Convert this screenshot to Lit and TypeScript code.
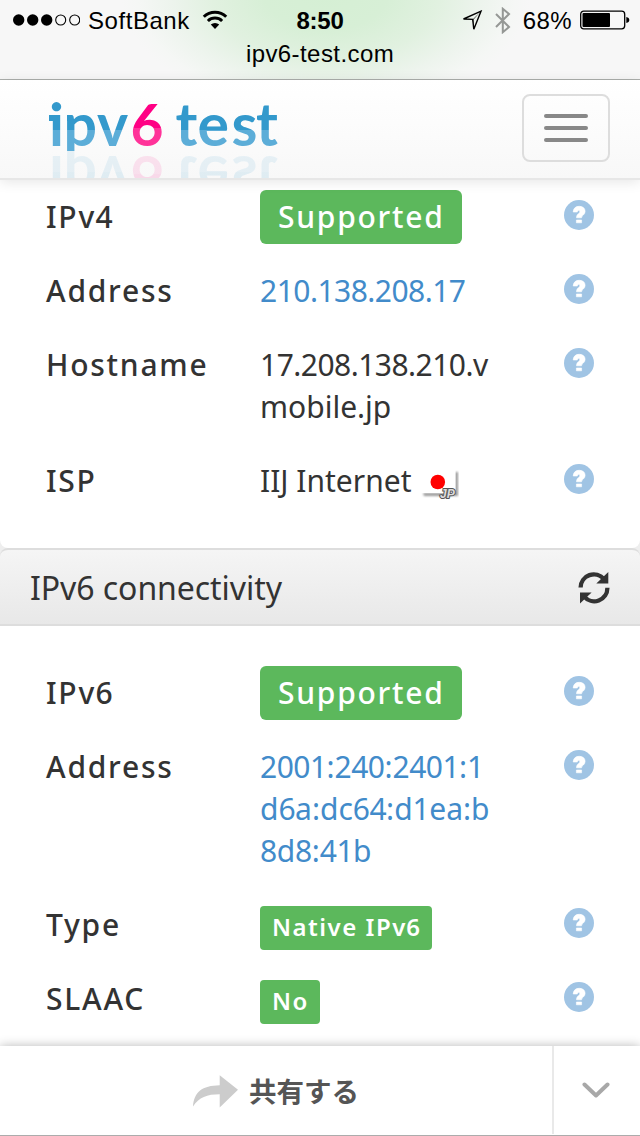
import { LitElement, html, svg, css } from "lit";
import { customElement, property } from "lit/decorators.js";

interface Row {
  label: string;
  lines: string[];
  kind?: "text" | "link" | "badge" | "tag";
  flag?: boolean;
}

const ipv4: Row[] = [
  { label: "IPv4", lines: ["Supported"], kind: "badge" },
  { label: "Address", lines: ["210.138.208.17"], kind: "link" },
  { label: "Hostname", lines: ["17.208.138.210.v", "mobile.jp"] },
  { label: "ISP", lines: ["IIJ Internet"], flag: true },
];

const ipv6: Row[] = [
  { label: "IPv6", lines: ["Supported"], kind: "badge" },
  { label: "Address", lines: ["2001:240:2401:1", "d6a:dc64:d1ea:b", "8d8:41b"], kind: "link" },
  { label: "Type", lines: ["Native IPv6"], kind: "tag" },
  { label: "SLAAC", lines: ["No"], kind: "tag" },
];

// Digits are set slightly tighter than letters.
const tightDigits = (text: string) =>
  text.split(/(\d+\.?)/).filter(Boolean).map((part) => (/\d/.test(part) ? html`<span class="num">${part}</span>` : part));

@customElement("status-bar")
class StatusBar extends LitElement {
  static styles = css`
    :host { display: block; height: 80px; box-sizing: border-box; border-bottom: 1px solid #acafac;
      background: radial-gradient(ellipse 205px 120px at 326px -6px, #d5efd4 0%, #d7efd6 30%, #e1f1e0 55%, #edf4ed 76%, #f5f7f5 92%, rgba(247,247,247,0) 100%), #f7f7f7;
      font: 24px/30px "Liberation Sans", Arial, sans-serif; color: #000; }
    .row { display: grid; grid-template-columns: 1fr auto 1fr; height: 40px; align-items: center; }
    .left { display: flex; align-items: center; padding-left: 12px; }
    .right { display: flex; align-items: center; justify-content: flex-end; padding-right: 10px; }
    .dots { margin-right: 8px; }
    .carrier { letter-spacing: .55px; margin-right: 12px; padding-top: 2px; }
    .time { font-weight: 700; font-size: 24px; letter-spacing: -.2px; padding-top: 2px; }
    .pct { margin: 0 8px 0 12px; padding-top: 2px; letter-spacing: .4px; }
    .host { text-align: center; letter-spacing: .42px; line-height: 28px; }
    svg { display: block; flex: none; }
    .bt { margin-left: 12px; }
  `;
  render() {
    return html`
      <div class="row">
        <div class="left">
          <svg class="dots" width="68" height="14" viewBox="0 0 68 14">
            ${[0, 1, 2, 3, 4].map((i) => svg`<circle cx=${6.7 + i * 14} cy="7" r=${i < 3 ? 5.7 : 5} fill=${i < 3 ? "#000" : "none"} stroke=${i < 3 ? "none" : "#000"} stroke-width="1.1"/>`)}
          </svg>
          <span class="carrier">SoftBank</span>
          <svg width="26" height="20" viewBox="0 0 26 20">
            <path d="M1.8 6.7a16 16 0 0 1 22.4 0M5.9 11a10.2 10.2 0 0 1 14.2 0" fill="none" stroke="#000" stroke-width="3"/>
            <path d="M8.8 14.6a6 6 0 0 1 8.4 0L13 19z"/>
          </svg>
        </div>
        <span class="time">8:50</span>
        <div class="right">
          <svg width="21" height="21" viewBox="0 0 21 21"><path d="M1.5 9L19 1.2 11.8 19.2 10.7 9.4z" fill="none" stroke="#000" stroke-width="1.4"/><path d="M19 1.2L10.7 9.4l1.1 9.8-.5-9.5z"/></svg>
          <svg class="bt" width="16" height="27" viewBox="0 0 16 27"><path d="M1 7l13 13-6.2 5.2V1.8L14 7 1 20" fill="none" stroke="#959895" stroke-width="2"/></svg>
          <span class="pct">68%</span>
          <svg width="50" height="20" viewBox="0 0 50 20"><rect x=".7" y="1.2" width="44" height="17.6" rx="3" fill="none" stroke="#000" stroke-width="1.3"/><rect x="2.5" y="3" width="27.5" height="14" rx="1"/><path d="M46.3 7q3 .6 3 3t-3 3z"/></svg>
        </div>
      </div>
      <div class="host">ipv6-test.com</div>`;
  }
}

@customElement("nav-header")
class NavHeader extends LitElement {
  static styles = css`
    :host { display: flex; justify-content: space-between; height: 100px; box-sizing: border-box; border-bottom: 2px solid #e7e7e7;
      background: linear-gradient(#fff, #f8f8f8); box-shadow: 0 2px 12px rgba(0,0,0,.1); position: relative; }
    .logo { display: block; margin-left: 40px; }
    .word { font: 700 59px "Lato", sans-serif; }
    .six { font-size: 57px; }
    .menu { width: 88px; height: 68px; box-sizing: border-box; margin: 14px 30px 0 0; padding: 0; border: 2px solid #ddd; border-radius: 8px;
      background: none; display: flex; flex-direction: column; align-items: center; justify-content: center; gap: 8px; }
    .bar { width: 44px; height: 4px; border-radius: 2px; background: #888; }
  `;
  render() {
    return html`
      <svg class="logo" width="250" height="98" viewBox="40 80 250 98">
        <defs>
          <linearGradient id="b" gradientUnits="userSpaceOnUse" x1="0" x2="0" y1="100" y2="160"><stop offset=".5" stop-color="#3399cc"/><stop offset=".5" stop-color="#5cadd8"/></linearGradient>
          <linearGradient id="p" gradientUnits="userSpaceOnUse" x1="0" x2="0" y1="100" y2="160"><stop offset=".47" stop-color="#ff0084"/><stop offset=".47" stop-color="#ff3399"/></linearGradient>
          <clipPath id="c"><rect x="40" y="90" width="250" height="61"/></clipPath>
          <g id="w" clip-path="url(#c)">
            <text class="word" y="146" x="49 63.5 97 130.5 162 175.5 197.5 231.5 256" fill="url(#b)">ipv<tspan class="six" fill="url(#p)">6</tspan> test</text>
            <path fill="#3399cc" d="M49 115h6v6h-6zM67 115h5v6h-5z"/>
          </g>
        </defs>
        <use href="#w"/>
        <use href="#w" transform="matrix(1 0 0 -1 0 302)" opacity=".12"/>
      </svg>
      <button class="menu" aria-label="Menu"><span class="bar"></span><span class="bar"></span><span class="bar"></span></button>`;
  }
}

@customElement("info-rows")
class InfoRows extends LitElement {
  @property({ attribute: false }) rows: Row[] = [];
  static styles = css`
    :host { display: flex; flex-direction: column; gap: 32px; padding: 0 46px; font: 30px/42px "Noto Sans", sans-serif; color: #333; }
    .row { display: grid; grid-template-columns: 214px 1fr 30px; align-items: start; }
    .label { font-weight: 500; letter-spacing: 1.75px; }
    .line { display: block; white-space: nowrap; }
    .value { display: block; min-width: 0; }
    .link { color: #428bca; }
    .line .num { letter-spacing: -.53px; }
    .label .num, .tag .num { letter-spacing: 1px; margin-left: -.6px; }
    .badge, .tag { display: block; width: fit-content; background: #5cb85c; color: #fff; font-weight: 500; box-sizing: border-box; }
    .badge { margin: -6px 0; height: 54px; line-height: 54px; padding: 0 17px 0 18px; width: 202px; border-radius: 6px; letter-spacing: 1.75px; }
    .tag { margin: 2px 0 -4px; height: 44px; line-height: 42px; padding: 0 11.3px 0 12px; border-radius: 4px; font-size: 24px; font-weight: 600; letter-spacing: 1.5px; }
    .help { display: block; margin-top: 4px; }
    .isp { display: flex; align-items: center; }
    .flag { margin: 4px 0 -2px 10px; }
    .code { font: italic 700 12px "Liberation Sans", sans-serif; }
  `;
  render() {
    return this.rows.map((r) => html`
      <div class="row">
        <span class="label">${tightDigits(r.label)}</span>
        <span class="value ${r.flag ? "isp" : ""}">
          ${r.lines.map((l) => html`<span class="${r.kind === "badge" || r.kind === "tag" ? r.kind : `line ${r.kind ?? ""}`}">${tightDigits(l)}</span>`)}
          ${r.flag ? html`<svg class="flag" width="38" height="32" viewBox="0 0 38 32">
            <defs><filter id="s" x="-20%" y="-20%" width="140%" height="150%"><feGaussianBlur stdDeviation=".9"/></filter></defs>
            <path d="M2 25H34V4h3V28H3z" fill="#999" filter="url(#s)"/>
            <rect x="0" y="2" width="34.5" height="23" fill="#fff"/>
            <circle cx="16.8" cy="14" r="7.3" fill="#f00"/>
            <text class="code" x="19" y="29.5" fill="#ddd" stroke="#555" stroke-width="2" paint-order="stroke">JP</text>
          </svg>` : ""}
        </span>
        <svg class="help" width="30" height="30" viewBox="0 0 30 30">
          <circle cx="15" cy="15" r="15" fill="#a0c4e4"/>
          <path d="M9.2 12c.2-3.8 2.5-5.7 6-5.7 3.4 0 5.9 1.9 5.9 5 0 3.9-3.6 4-3.6 6.5h-5c0-4.2 3.3-4.1 3.3-6.1 0-.8-.4-1.2-1.1-1.2-.8 0-1.3.6-1.4 1.5zM12.4 20h5.2v2.8h-5.2z" fill="#fff" stroke="#fff" stroke-width=".6"/>
        </svg>
      </div>`);
  }
}

@customElement("share-bar")
class ShareBar extends LitElement {
  static styles = css`
    :host { display: flex; height: 90px; box-sizing: border-box; border-bottom: 1px solid #acacac; background: #fff;
      box-shadow: 0 0 10px rgba(0,0,0,.28); position: relative; font: 700 28px/40px "Noto Sans CJK JP", sans-serif; color: #555; }
    .share { width: 552px; display: flex; align-items: center; justify-content: center; gap: 11px; }
    .arrow { margin-top: 2px; }
    .text { font-size: 27.5px; margin-top: -2px; }
    .more { flex: 1; border-left: 2px solid #e9e9e9; display: flex; align-items: center; justify-content: center; height: 88px; padding-right: 2px; }
    svg { display: block; }
  `;
  render() {
    return html`
      <div class="share">
        <svg class="arrow" width="45" height="33" viewBox="0 0 45 33"><path d="M0 31.5C1 17 9 10.5 26.7 10.2V.3L45 14.8 26.7 32.6V19.3C14 19.3 6 22.3 0 31.5z" fill="#ccc"/></svg>
        <span class="text">共有する</span>
      </div>
      <div class="more"><svg width="28" height="18" viewBox="0 0 28 18"><path d="M2.5 3.5L14 14.5 25.5 3.5" fill="none" stroke="#a8a8a8" stroke-width="4" stroke-linecap="round" stroke-linejoin="round"/></svg></div>`;
  }
}

@customElement("app-root")
class AppRoot extends LitElement {
  static styles = css`
    :host { display: flex; flex-direction: column; height: 1136px; overflow: hidden; background: #fff; }
    .content { flex: 1; min-height: 0; background: #eee; }
    .first { padding-top: 16px; height: 352px; border-radius: 0 0 8px 8px; box-sizing: content-box; background: #fff; }
    .second { padding-top: 46px; height: 374px; background: #fff; }
    .heading { display: flex; align-items: center; justify-content: space-between; height: 78px; box-sizing: border-box; margin: 0; padding: 0 30px;
      border: solid #ddd; border-width: 2px 0; border-radius: 8px 8px 0 0; background: linear-gradient(#f5f5f5, #e8e8e8);
      font: 400 32px/42px "Noto Sans", sans-serif; color: #333; }
    .title { padding-top: 2px; letter-spacing: -.06px; }
    .refresh { margin-top: 2px; }
  `;
  render() {
    return html`
      <status-bar></status-bar>
      <nav-header></nav-header>
      <div class="content">
        <div class="first"><info-rows .rows=${ipv4}></info-rows></div>
        <h3 class="heading"><span class="title">IPv6 connectivity</span>
          <svg class="refresh" width="32" height="32" viewBox="0 0 32 32"><path d="M2.6 15.5A13.2 13.2 0 0 1 26 7.2M29.4 15.8A13.2 13.2 0 0 1 6 24.4" fill="none" stroke="#333" stroke-width="4.3"/><path d="M30.3 0V11.5H18.3zM2 31.5V20.6H13.6z" fill="#333"/></svg>
        </h3>
        <div class="second"><info-rows .rows=${ipv6}></info-rows></div>
      </div>
      <share-bar></share-bar>`;
  }
}
